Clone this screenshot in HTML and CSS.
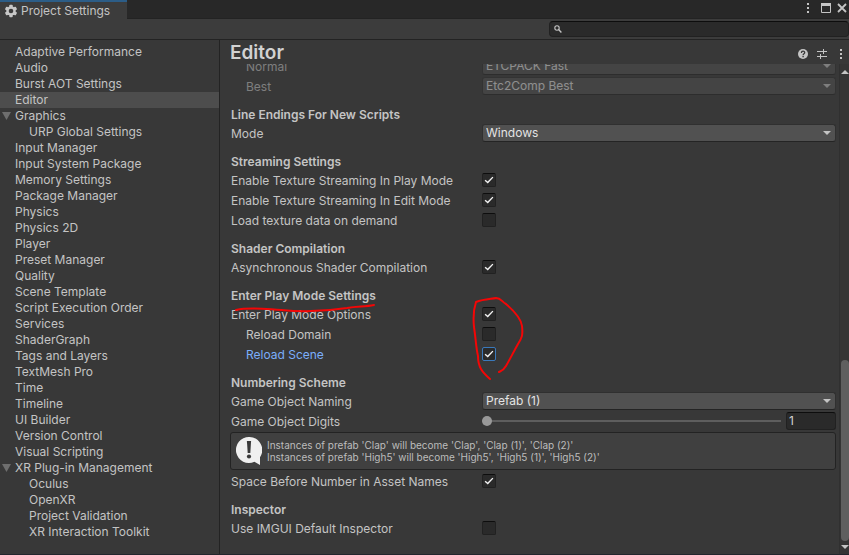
FILE: index.html
```html
<!DOCTYPE html>
<html lang="en">
<head>
<meta charset="utf-8">
<meta name="viewport" content="width=device-width, initial-scale=1">
<title>Project Settings</title>
<link rel="stylesheet" href="styles.css">
</head>
<body>
<div class="window">
  <header class="tabbar">
    <div class="tab">
      <svg class="gear" width="14" height="14" viewBox="0 0 14 14" aria-hidden="true">
        <g fill="#c8c8c8"><rect x="5.3" y="0.8" width="3.4" height="12.4" rx=".8"/><rect x="5.3" y="0.8" width="3.4" height="12.4" rx=".8" transform="rotate(60 7 7)"/><rect x="5.3" y="0.8" width="3.4" height="12.4" rx=".8" transform="rotate(120 7 7)"/><circle cx="7" cy="7" r="4.7"/></g>
        <circle cx="7" cy="7" r="2.3" fill="#3c3c3c"/>
      </svg>
      <span>Project Settings</span>
    </div>
    <div class="window-buttons">
      <button class="icon-button" aria-label="Window menu"><svg width="4" height="12" viewBox="0 0 4 12" fill="#c4c4c4"><path d="M1 1h2v2H1zM1 5h2v2H1zM1 9h2v2H1z"/></svg></button>
      <button class="icon-button" aria-label="Maximize"><svg width="10" height="10" viewBox="0 0 10 10"><path d="M.5.5h9v9h-9z" fill="none" stroke="#c4c4c4"/><path d="M0 0h10v3H0z" fill="#c4c4c4"/></svg></button>
      <button class="icon-button" aria-label="Close"><svg width="10" height="10" viewBox="0 0 10 10"><path d="M1 1l8 8M9 1L1 9" stroke="#c4c4c4" stroke-width="1.8"/></svg></button>
    </div>
  </header>

  <div class="toolbar">
    <label class="search">
      <svg width="8" height="8" viewBox="0 0 8 8" aria-hidden="true"><circle cx="3" cy="3" r="2.2" fill="none" stroke="#c4c4c4" stroke-width="1.1"/><path d="M4.6 4.6l2.8 2.8" stroke="#c4c4c4" stroke-width="1.4"/></svg>
      <input type="text" aria-label="Search settings">
    </label>
  </div>

  <div class="body">
    <nav class="sidebar" aria-label="Settings categories">
      <a href="#">Adaptive Performance</a>
      <a href="#">Audio</a>
      <a href="#">Burst AOT Settings</a>
      <a href="#" class="selected" aria-current="page">Editor</a>
      <a href="#" class="open">Graphics</a>
      <a href="#" class="child">URP Global Settings</a>
      <a href="#">Input Manager</a>
      <a href="#">Input System Package</a>
      <a href="#">Memory Settings</a>
      <a href="#">Package Manager</a>
      <a href="#">Physics</a>
      <a href="#">Physics 2D</a>
      <a href="#">Player</a>
      <a href="#">Preset Manager</a>
      <a href="#">Quality</a>
      <a href="#">Scene Template</a>
      <a href="#">Script Execution Order</a>
      <a href="#">Services</a>
      <a href="#">ShaderGraph</a>
      <a href="#">Tags and Layers</a>
      <a href="#">TextMesh Pro</a>
      <a href="#">Time</a>
      <a href="#">Timeline</a>
      <a href="#">UI Builder</a>
      <a href="#">Version Control</a>
      <a href="#">Visual Scripting</a>
      <a href="#" class="open">XR Plug-in Management</a>
      <a href="#" class="child">Oculus</a>
      <a href="#" class="child">OpenXR</a>
      <a href="#" class="child">Project Validation</a>
      <a href="#" class="child">XR Interaction Toolkit</a>
    </nav>

    <main class="panel">
      <div class="panel-head">
        <h1>Editor</h1>
        <div class="panel-buttons">
          <button class="icon-button" aria-label="Help"><svg width="10" height="10" viewBox="0 0 10 10"><circle cx="5" cy="5" r="5" fill="#c4c4c4"/><path d="M3.4 3.9C3.4 1.6 6.7 1.7 6.7 3.7 6.7 4.9 5.1 4.8 5.1 6.2" fill="none" stroke="#383838" stroke-width="1.3"/><path d="M4.4 7h1.4v1.3H4.4z" fill="#383838"/></svg></button>
          <button class="icon-button" aria-label="Presets"><svg width="10" height="10" viewBox="0 0 10 10" fill="#c4c4c4"><path d="M0 2h6v1H0zM7 2h3v1H7zM6 0h1v5H6zM0 7h3v1H0zM4 7h6v1H4zM3 5h1v5H3z"/></svg></button>
          <button class="icon-button" aria-label="More"><svg width="4" height="12" viewBox="0 0 4 12" fill="#c4c4c4"><path d="M1 1h2v2H1zM1 5h2v2H1zM1 9h2v2H1z"/></svg></button>
        </div>
      </div>

      <div class="viewport">
        <form class="settings">
          <div class="row indent disabled"><label for="fast">Normal</label><div class="select"><select id="fast" disabled><option>ETCPACK Fast</option></select></div></div>
          <div class="row indent disabled"><label for="best">Best</label><div class="select"><select id="best" disabled><option>Etc2Comp Best</option></select></div></div>

          <h2>Line Endings For New Scripts</h2>
          <div class="row"><label for="mode">Mode</label><div class="select"><select id="mode"><option>Windows</option></select></div></div>

          <h2>Streaming Settings</h2>
          <div class="row"><label for="playtex">Enable Texture Streaming In Play Mode</label><input type="checkbox" id="playtex" checked></div>
          <div class="row"><label for="edittex">Enable Texture Streaming In Edit Mode</label><input type="checkbox" id="edittex" checked></div>
          <div class="row"><label for="demand">Load texture data on demand</label><input type="checkbox" id="demand"></div>

          <h2>Shader Compilation</h2>
          <div class="row"><label for="async">Asynchronous Shader Compilation</label><input type="checkbox" id="async" checked></div>

          <h2>Enter Play Mode Settings</h2>
          <div class="row"><label for="enter">Enter Play Mode Options</label><input type="checkbox" id="enter" checked></div>
          <div class="row indent"><label for="domain">Reload Domain</label><input type="checkbox" id="domain"></div>
          <div class="row indent focused"><label for="scene">Reload Scene</label><input type="checkbox" id="scene" checked></div>

          <h2>Numbering Scheme</h2>
          <div class="row"><label for="naming">Game Object Naming</label><div class="select"><select id="naming"><option>Prefab (1)</option></select></div></div>
          <div class="row"><label for="digits">Game Object Digits</label><div class="slider"><input type="range" min="1" max="5" value="1" aria-label="Game Object Digits slider"><input type="text" id="digits" value="1"></div></div>
          <div class="help">
            <svg width="26" height="28" viewBox="0 0 26 28" aria-hidden="true"><path d="M13 0a13 13 0 1 0 5.400 24.800L24 28V20.200A13 13 0 0 0 13 0z" fill="#f0f0f0"/><path d="M10.900 4h4.200l-.8 12h-2.600z" fill="#3a3a3a"/><circle cx="13" cy="19.500" r="2.100" fill="#3a3a3a"/></svg>
            <p>Instances of prefab 'Clap' will become 'Clap', 'Clap (1)', 'Clap (2)'<br>Instances of prefab 'High5' will become 'High5', 'High5 (1)', 'High5 (2)'</p>
          </div>
          <div class="row"><label for="space">Space Before Number in Asset Names</label><input type="checkbox" id="space" checked></div>

          <h2>Inspector</h2>
          <div class="row"><label for="imgui">Use IMGUI Default Inspector</label><input type="checkbox" id="imgui"></div>

          <svg class="marks" width="320" height="110" viewBox="0 0 320 110" aria-hidden="true">
            <g fill="none" stroke="#f40606" stroke-width="2" stroke-linecap="round" stroke-linejoin="round">
              <path d="M16 30C30 27 44 29 61 30C82 32 108 31 127 28C138 26 145 27 154 25"/>
              <path d="M270 99C262 92 258 87 258 76C256 68 256 60 254 47C253 37 254 28 256 22C264 19 272 19 276 18C281 18 282 22 286 24C293 30 301 38 302 46C303 55 302 58 298 64C293 73 290 79 286 86C283 91 281 91 279 92"/>
            </g>
          </svg>
        </form>
        <div class="scrollbar" aria-hidden="true">
          <i class="up"></i><div class="track"><div class="thumb"></div></div><i class="down"></i>
        </div>
      </div>
    </main>
  </div>
</div>
</body>
</html>
```
FILE: styles.css
```css
* { box-sizing: border-box; }

body {
  margin: 0;
  background: #383838;
  color: #c4c4c4;
  font: 12px/16px Inter, "Liberation Sans", sans-serif;
}

input, select, button { font: inherit; color: inherit; margin: 0; }

.window {
  display: flex;
  flex-direction: column;
  height: 100vh;
  overflow: hidden;
  border-bottom: 1px solid #23262d;
}

.icon-button {
  display: flex;
  padding: 0;
  border: 0;
  background: none;
}

/* Tab bar */
.tabbar {
  display: flex;
  justify-content: space-between;
  height: 19px;
  background: #282828;
  box-shadow: inset 0 -1px #232323;
}
.tab {
  display: flex;
  align-items: center;
  gap: 3px;
  padding: 0 17px 0 4px;
  border-top: 2px solid #2c5d87;
  background: #3c3c3c;
}
.window-buttons {
  display: flex;
  align-items: center;
  gap: 6px;
  padding: 0 2px 3px 0;
}
.window-buttons .icon-button:first-child { margin-right: 5px; }

/* Search */
.toolbar {
  display: flex;
  justify-content: flex-end;
  align-items: center;
  height: 21px;
  background: #3c3c3c;
  border-bottom: 1px solid #232323;
}
.search {
  display: flex;
  align-items: center;
  gap: 4px;
  width: 300px;
  height: 16px;
  padding-left: 4px;
  border: 1px solid #212121;
  border-top-color: #0d0d0d;
  border-radius: 4px;
  background: #2a2a2a;
}
.search input {
  flex: 1;
  min-width: 0;
  height: 14px;
  padding: 0;
  border: 0;
  outline: 0;
  background: none;
}

.body { display: flex; flex: 1; min-height: 0; }

/* Category list */
.sidebar {
  flex: none;
  width: 220px;
  padding-top: 4px;
  border-right: 1px solid #232323;
}
.sidebar a {
  display: flex;
  align-items: center;
  height: 16px;
  padding-left: 15px;
  line-height: 18px;
  color: inherit;
  text-decoration: none;
}
.sidebar .selected { background: #4d4d4d; }
.sidebar .child { padding-left: 29px; }
.sidebar .open { padding-left: 2px; }
.sidebar .open::before {
  content: "";
  width: 9px;
  height: 8px;
  margin-right: 4px;
  background: #6e6e6e;
  clip-path: polygon(0 0, 100% 0, 50% 100%);
}

/* Settings panel */
.panel { display: flex; flex-direction: column; flex: 1; min-width: 0; }
.panel-head {
  display: flex;
  justify-content: space-between;
  align-items: center;
  height: 24px;
  padding: 0 6px 0 10px;
}
.panel-head h1 { margin: 0; font-size: 19px; line-height: 24px; padding-top: 2px; font-weight: 600; color: #d2d2d2; }
.panel-buttons { display: flex; align-items: center; gap: 9px; padding-top: 4px; }
.panel-buttons .icon-button:last-child { margin-left: 3px; }

.viewport { display: flex; flex: 1; min-height: 0; overflow: hidden; }
.settings {
  position: relative;
  flex: 1;
  align-self: flex-start;
  margin-top: -7px;
  padding: 0 3px 0 11px;
}
.settings h2 {
  margin: 0;
  padding-top: 9px;
  font-size: 12px;
  line-height: 18px;
  font-weight: 600;
}
.row { display: grid; grid-template-columns: 251px 1fr; height: 20px; line-height: 20px; }
.indent label { padding-left: 15px; }
.disabled { opacity: .5; }
.focused label { color: #7baefa; }

.select { position: relative; height: 18px; }
.select::after {
  content: "";
  position: absolute;
  right: 5px;
  top: 7px;
  width: 8px;
  height: 4px;
  background: #c4c4c4;
  clip-path: polygon(0 0, 100% 0, 50% 100%);
}
.select select {
  appearance: none;
  display: block;
  width: 100%;
  height: 18px;
  padding: 0 16px 0 3px;
  border: 1px solid #303030;
  border-bottom-color: #242424;
  border-radius: 3px;
  background: #515151;
  color: #e4e4e4;
  line-height: 16px;
  opacity: 1;
}

.row input[type="checkbox"] {
  appearance: none;
  display: grid;
  place-items: center;
  width: 14px;
  height: 14px;
  margin-top: 2px;
  border: 1px solid #212121;
  border-top-color: #0d0d0d;
  border-radius: 2px;
  background: #2a2a2a;
}
.row input[type="checkbox"]:checked::before {
  content: "";
  width: 10px;
  height: 8px;
  background: #f0f0f0;
  clip-path: polygon(6% 58%, 16% 46%, 36% 70%, 84% 10%, 94% 20%, 38% 94%);
}
.row.focused input[type="checkbox"] { border-color: #3a79bb; }

.slider { display: flex; align-items: center; gap: 5px; height: 18px; }
.slider input[type="range"] {
  appearance: none;
  flex: 1;
  min-width: 0;
  height: 10px;
  background: linear-gradient(#5e5e5e, #5e5e5e) center / 100% 2px no-repeat;
}
.slider input[type="range"]::-webkit-slider-thumb {
  appearance: none;
  width: 10px;
  height: 10px;
  border-radius: 50%;
  background: #999;
}
.slider input[type="text"] {
  width: 50px;
  height: 18px;
  padding: 0 2px;
  border: 1px solid #212121;
  border-top-color: #0d0d0d;
  border-radius: 3px;
  background: #2a2a2a;
  color: #d2d2d2;
}

.help {
  display: flex;
  align-items: center;
  gap: 5px;
  height: 38px;
  margin: 0 0 2px -1px;
  padding-left: 5px;
  border: 1px solid #232323;
  border-radius: 3px;
  background: #404040;
  font-size: 10px;
  line-height: 12px;
  color: #bdbdbd;
}
.help svg { flex: none; }
.help p { margin: 0; }

/* Hand-drawn marks over the play mode settings */
.marks { position: absolute; left: 0; top: 223px; pointer-events: none; }

/* Scrollbar */
.scrollbar {
  display: flex;
  flex-direction: column;
  align-items: center;
  gap: 4px;
  width: 10px;
  padding: 6px 0 5px 1px;
  border-left: 1px solid #303030;
  background: #353535;
}
.scrollbar i { width: 8px; height: 4px; background: #c4c4c4; }
.scrollbar .up { clip-path: polygon(50% 0, 100% 100%, 0 100%); }
.scrollbar .down { clip-path: polygon(0 0, 100% 0, 50% 100%); }
.track { display: flex; flex: 1; align-self: stretch; align-items: flex-end; }
.thumb { width: 100%; height: 39%; border-radius: 4px; background: #5f5f5f; }
```
